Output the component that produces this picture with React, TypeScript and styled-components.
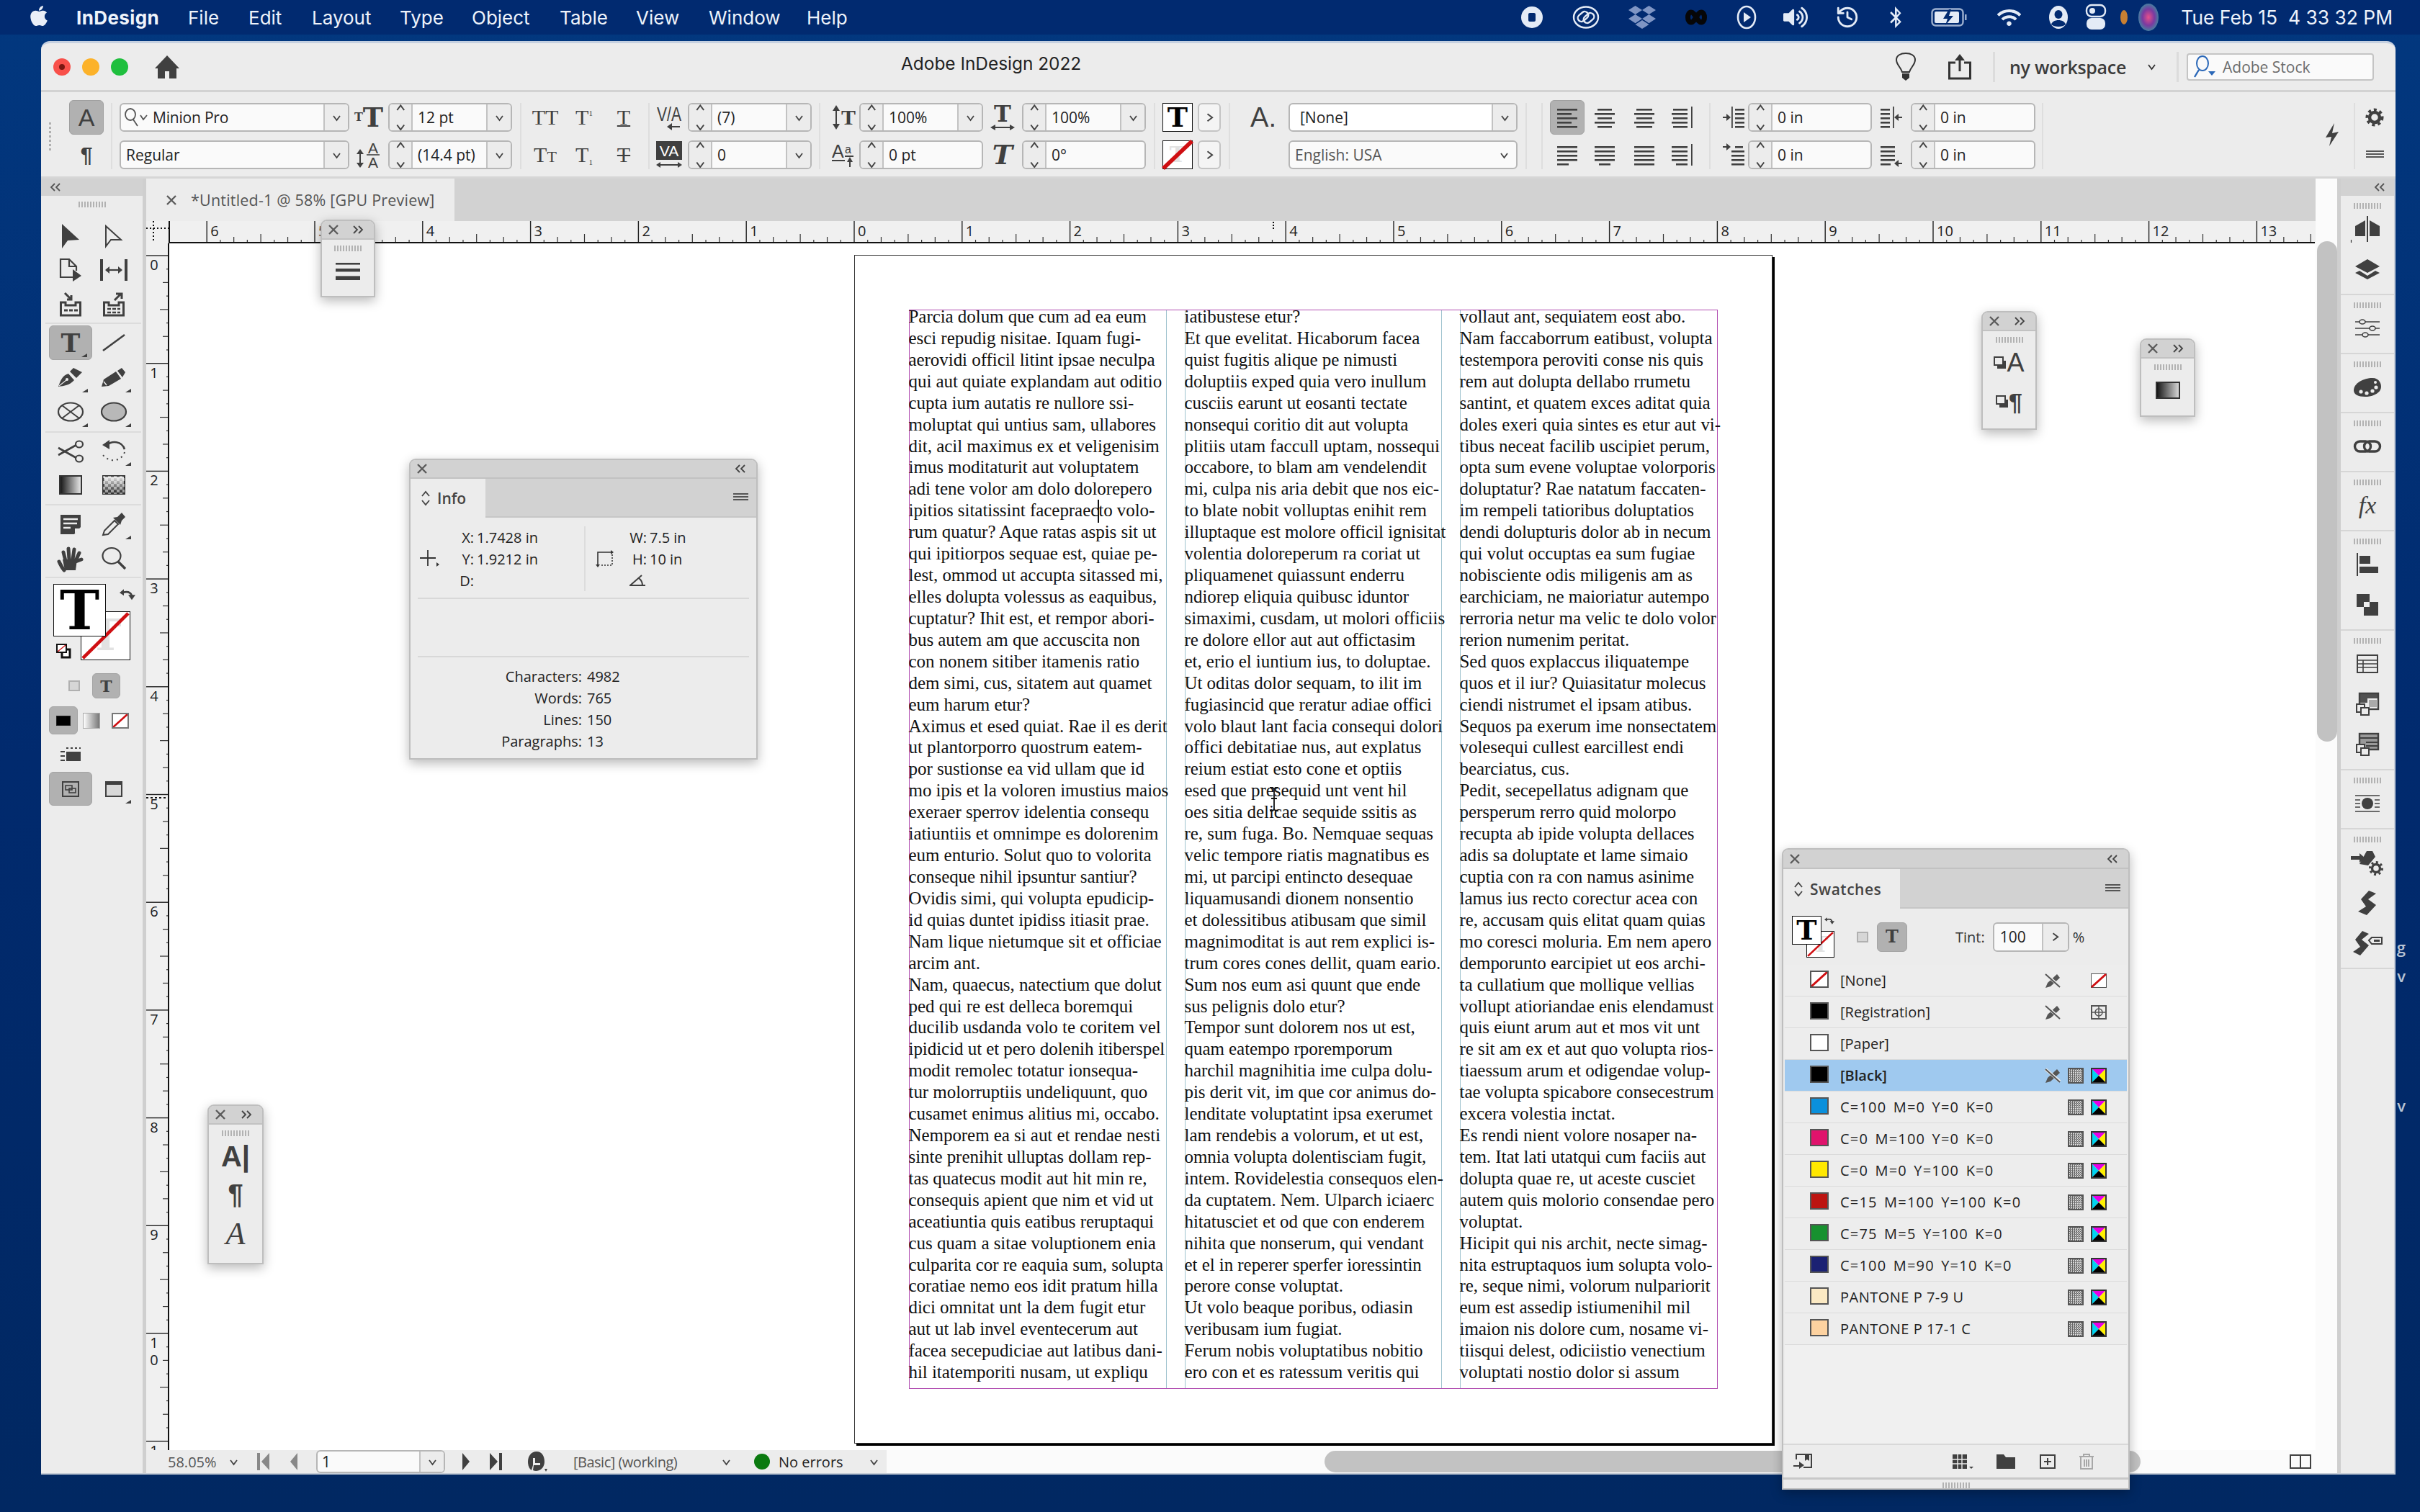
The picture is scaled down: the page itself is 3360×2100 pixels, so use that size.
import React from "react";
import styled, { createGlobalStyle } from "styled-components";
import { FaApple, FaDropbox, FaBluetoothB, FaWifi, FaVolumeUp } from "react-icons/fa";
import { History } from "lucide-react";

const DARK = "#404040";
const UI = `"Open Sans", "Noto Sans", sans-serif`;
const SERIF = `"Liberation Serif", serif`;
const SANS = `"Liberation Sans", sans-serif`;

const GlobalStyle = createGlobalStyle`
  html, body { margin: 0; padding: 0; width: 3360px; height: 2100px; overflow: hidden; }
  body { font-family: ${UI}; color: #222; }
  * { box-sizing: border-box; }
  svg { display: block; flex: none; overflow: visible; }
`;

const Desktop = styled.div`
  position: relative;
  width: 3360px;
  height: 2100px;
  display: flex;
  flex-direction: column;
  overflow: hidden;
  background: linear-gradient(180deg, #02387f 0%, #012a6e 50%, #012862 100%);
`;

const MenuBar = styled.header`
  height: 48px;
  flex: none;
  display: flex;
  align-items: center;
  padding: 0 38px 0 38px;
  background: #012a70;
  color: #eef3fb;
  font-family: Inter, "Liberation Sans", sans-serif;
  font-size: 26px;
`;
const AppleSlot = styled.div`
  width: 68px;
  margin-top: -4px;
`;
const MenuItem = styled.span<{ $bold?: boolean; $w: number }>`
  width: ${(p) => p.$w}px;
  font-weight: ${(p) => (p.$bold ? 700 : 400)};
  letter-spacing: ${(p) => (p.$bold ? 0.4 : 0)}px;
`;
const MenuRight = styled.div`
  margin-left: auto;
  display: flex;
  align-items: center;
  color: #e4ebf6;
`;
const StatusSlot = styled.div<{ $w: number }>`
  width: ${(p) => p.$w}px;
  display: flex;
  justify-content: center;
`;
const Clock = styled.span`
  margin-left: 11px;
  white-space: pre;
  color: #eef3fb;
  font-size: 26.4px;
`;

const Window = styled.main`
  margin: 9px 0 0 57px;
  width: 3269px;
  height: 1991px;
  flex: none;
  display: flex;
  flex-direction: column;
  background: #ececec;
  border-radius: 12px 12px 0 0;
  border-top: 3px solid #c5d0e0;
  border-bottom: 2px solid #c5ccd6;
`;

const TitleBar = styled.div`
  height: 68px;
  flex: none;
  position: relative;
  display: flex;
  align-items: center;
  padding-left: 17px;
  border-bottom: 3px solid #d2d2d2;
`;
const Light = styled.div<{ $c: string }>`
  width: 24px;
  height: 24px;
  border-radius: 50%;
  margin-right: 16px;
  background: ${(p) => p.$c};
  display: flex;
  align-items: center;
  justify-content: center;
`;
const LightDot = styled.div`
  width: 8px;
  height: 8px;
  border-radius: 50%;
  background: #7a1712;
`;
const HomeIcon = styled.svg`
  margin-left: 21px;
`;
const WindowTitle = styled.div`
  position: absolute;
  left: 1194px;
  top: 13px;
  font-family: Inter, "Liberation Sans", sans-serif;
  font-size: 24.4px;
  color: #222;
`;
const TitleRight = styled.div`
  margin-left: auto;
  display: flex;
  align-items: center;
  height: 100%;
`;
const TitleIcon = styled.svg<{ $mr: number }>`
  margin-right: ${(p) => p.$mr}px;
`;
const TitleSep = styled.div`
  width: 3px;
  height: 42px;
  background: #dcdcdc;
`;
const WorkspaceName = styled.div`
  display: flex;
  align-items: center;
  gap: 28px;
  padding: 0 27px 0 20px;
  font-size: 25px;
  font-weight: 600;
  color: #3c3c3c;
  letter-spacing: -0.3px;
  white-space: nowrap;
`;
const StockField = styled.div`
  width: 260px;
  height: 38px;
  margin: 0 30px 0 11px;
  display: flex;
  align-items: center;
  gap: 9px;
  padding-left: 7px;
  background: #fafafa;
  border: 2px solid #c4c4c4;
  border-radius: 4px;
  font-size: 21px;
  color: #6c6c6c;
`;

const ControlBar = styled.div`
  height: 120px;
  flex: none;
  display: flex;
  padding-top: 15px;
  border-bottom: 3px solid #d6d6d6;
`;
const Col = styled.div<{ $w: number; $ml?: number; $pr?: number }>`
  width: ${(p) => p.$w}px;
  margin-left: ${(p) => p.$ml ?? 0}px;
  padding-right: ${(p) => p.$pr ?? 0}px;
  height: 92px;
  flex: none;
  display: flex;
  flex-direction: column;
  gap: 12px;
  align-items: center;
`;
const Cell = styled.div`
  height: 40px;
  display: flex;
  align-items: center;
  justify-content: center;
`;
const Sep = styled.div<{ $w: number }>`
  width: ${(p) => p.$w}px;
  height: 92px;
  flex: none;
  display: flex;
  justify-content: center;
  &::before { content: ""; width: 2px; background: #dedede; }
`;
const GripV = styled.div`
  width: 3px;
  height: 40px;
  margin: 27px 0 0 -14px;
  background: repeating-linear-gradient(180deg, #b0b0b0 0 3px, transparent 3px 6px);
`;
const ModeButton = styled.div<{ $on?: boolean }>`
  width: 48px;
  height: ${(p) => (p.$on ? 48 : 40)}px;
  margin-top: ${(p) => (p.$on ? -4 : 0)}px;
  margin-bottom: ${(p) => (p.$on ? -4 : 0)}px;
  border-radius: 6px;
  display: flex;
  align-items: center;
  justify-content: center;
  background: ${(p) => (p.$on ? "#b1b1b1" : "transparent")};
  border: ${(p) => (p.$on ? "1px solid #a0a0a0" : "none")};
  color: ${DARK};
`;
const Field = styled.div<{ $w?: number; $bg?: string }>`
  width: ${(p) => (p.$w ? `${p.$w}px` : "100%")};
  height: 40px;
  flex: none;
  display: flex;
  align-items: stretch;
  background: ${(p) => p.$bg ?? "#fafafa"};
  border: 2.5px solid #b6b6b6;
  border-radius: 6px;
  font-size: 21px;
  color: #222;
  overflow: hidden;
`;
const FieldText = styled.div<{ $pl?: number; $c?: string }>`
  flex: 1;
  min-width: 0;
  display: flex;
  align-items: center;
  padding-left: ${(p) => p.$pl ?? 7}px;
  color: ${(p) => p.$c ?? "#222"};
  white-space: nowrap;
`;
const FontName = styled.span`
  margin-left: 5px;
  letter-spacing: -0.2px;
`;
const FieldDrop = styled.div<{ $w?: number; $flat?: boolean }>`
  width: ${(p) => p.$w ?? 34}px;
  flex: none;
  display: flex;
  align-items: center;
  justify-content: center;
  background: ${(p) => (p.$flat ? "transparent" : "#ececec")};
  border-left: ${(p) => (p.$flat ? "0" : "2px solid #c2c2c2")};
`;
const Spinner = styled.div`
  width: 32px;
  flex: none;
  display: flex;
  flex-direction: column;
  align-items: center;
  justify-content: center;
  gap: 9px;
  background: #ececec;
  border-right: 2px solid #c2c2c2;
`;
const SideButton = styled.div`
  width: 32px;
  height: 40px;
  border: 2.5px solid #c4c4c4;
  border-radius: 6px;
  background: #f4f4f4;
  display: flex;
  align-items: center;
  justify-content: center;
`;
const Spacer = styled.div<{ $w: number }>`
  width: ${(p) => p.$w}px;
  flex: none;
  display: flex;
  justify-content: flex-end;
  padding: 28px 10px 0 0;
`;
const Glyph = styled.span<{ $size: number; $font?: string; $weight?: number; $italic?: boolean; $c?: string }>`
  font-family: ${(p) => p.$font ?? `"DejaVu Serif", serif`};
  font-size: ${(p) => p.$size}px;
  font-weight: ${(p) => p.$weight ?? 400};
  font-style: ${(p) => (p.$italic ? "italic" : "normal")};
  color: ${(p) => p.$c ?? DARK};
  line-height: 1;
  white-space: nowrap;
`;
const Under = styled(Glyph)`
  text-decoration: underline;
  text-decoration-thickness: 2px;
`;
const Struck = styled(Glyph)`
  text-decoration: line-through;
  text-decoration-thickness: 2px;
`;
const Mark = styled.span<{ $sub?: boolean }>`
  font-size: 11px;
  vertical-align: ${(p) => (p.$sub ? "-4px" : "12px")};
`;
const SmallCap = styled.span`
  font-size: 22px;
`;

const Workspace = styled.div`
  flex: 1;
  min-height: 0;
  display: flex;
`;
const LeftDock = styled.aside`
  width: 141px;
  flex: none;
  display: flex;
  flex-direction: column;
`;
const DockHead = styled.div<{ $right?: boolean }>`
  height: 24px;
  flex: none;
  display: flex;
  align-items: center;
  justify-content: ${(p) => (p.$right ? "flex-end" : "flex-start")};
  padding: 0 12px;
  background: #d2d2d2;
`;
const Grip = styled.div<{ $w?: number }>`
  width: ${(p) => p.$w ?? 38}px;
  height: 8px;
  flex: none;
  background: repeating-linear-gradient(90deg, #b2b2b2 0 2px, transparent 2px 4px);
`;
const ToolGrid = styled.div<{ $row: number; $mt?: number }>`
  display: grid;
  grid-template-columns: 60px 60px;
  grid-auto-rows: ${(p) => p.$row}px;
  padding-left: 11px;
  margin-top: ${(p) => p.$mt ?? 0}px;
`;
const ToolSep = styled.div<{ $mt?: number; $mb?: number }>`
  height: 2px;
  flex: none;
  margin: ${(p) => p.$mt ?? 3}px 2px ${(p) => p.$mb ?? 2}px 6px;
  background: #dcdcdc;
`;
const Tool = styled.div<{ $on?: boolean; $fly?: boolean }>`
  position: relative;
  display: flex;
  align-items: center;
  justify-content: center;
  border-radius: 6px;
  background: ${(p) => (p.$on ? "#b1b1b1" : "transparent")};
  border: ${(p) => (p.$on ? "1px solid #a4a4a4" : "none")};
  &::after {
    content: "";
    display: ${(p) => (p.$fly ? "block" : "none")};
    position: absolute;
    right: 6px;
    bottom: 3px;
    border-left: 8px solid transparent;
    border-bottom: 5px solid #404040;
  }
`;
const FsSlot = styled.div`
  margin: 6px 0 0 17px;
`;
const FormatRow = styled.div`
  display: flex;
  align-items: center;
  margin: 18px 0 0 38px;
  gap: 17px;
`;
const SmallRect = styled.div`
  width: 16px;
  height: 15px;
  background: #d6d6d6;
  border: 2px solid #b0b0b0;
`;
const GrayButton = styled.div<{ $w: number; $h: number }>`
  width: ${(p) => p.$w}px;
  height: ${(p) => p.$h}px;
  border-radius: 6px;
  background: #b1b1b1;
  border: 1px solid #a4a4a4;
  display: flex;
  align-items: center;
  justify-content: center;
  flex: none;
`;
const ColorRow = styled.div`
  display: flex;
  align-items: center;
  margin: 11px 0 0 11px;
  gap: 7px;
`;
const ColorBlock = styled.div`
  width: 20px;
  height: 14px;
  background: #000;
  border: 1px solid #222;
`;
const GradChip = styled.div`
  width: 24px;
  height: 22px;
  background: linear-gradient(90deg, #fff, #777);
  border: 1px solid #aaa;
`;
const NoneChip = styled.div`
  width: 24px;
  height: 22px;
  margin-left: 9px;
  position: relative;
  background: #fff;
  border: 2px solid #777;
  overflow: hidden;
`;
const Centered = styled.div<{ $mt: number; $ml: number; $w: number }>`
  width: ${(p) => p.$w}px;
  margin: ${(p) => p.$mt}px 0 0 ${(p) => p.$ml}px;
  position: relative;
  display: flex;
  justify-content: center;
`;
const ScreenRow = styled.div`
  display: grid;
  grid-template-columns: 60px 60px;
  grid-auto-rows: 47px;
  margin: 14px 0 0 11px;
`;

const Divider = styled.div`
  width: 5px;
  flex: none;
  background: #cfcfcf;
`;
const Center = styled.section`
  flex: 1;
  min-width: 0;
  display: flex;
  flex-direction: column;
`;
const TabBar = styled.div`
  height: 59px;
  flex: none;
  background: #d2d2d2;
`;
const Tab = styled.div`
  width: 428px;
  height: 59px;
  display: flex;
  align-items: center;
  gap: 20px;
  padding-left: 28px;
  background: #ececec;
  font-size: 21.5px;
  color: #555;
  letter-spacing: 0.2px;
  white-space: nowrap;
`;
const ViewRow = styled.div`
  flex: 1;
  min-height: 0;
  display: flex;
`;
const ViewMain = styled.div`
  flex: 1;
  min-width: 0;
  display: flex;
  flex-direction: column;
`;
const VScroll = styled.div`
  width: 30px;
  flex: none;
  padding: 87px 0 0 2px;
  background: #fbfbfb;
`;
const VThumb = styled.div`
  width: 28px;
  height: 695px;
  border-radius: 14px;
  background: #c2c2c2;
`;
const RulerRow = styled.div`
  height: 31px;
  flex: none;
  display: flex;
  background: #f0f0f0;
`;
const Corner = styled.div`
  width: 32px;
  flex: none;
`;
const CanvasRow = styled.div`
  flex: 1;
  min-height: 0;
  display: flex;
`;
const VRulerSvg = styled.svg`
  background: #f0f0f0;
`;
const Canvas = styled.div`
  flex: 1;
  min-width: 0;
  position: relative;
  background: #fff;
  overflow: hidden;
`;
const Page = styled.div`
  position: absolute;
  left: 951px;
  top: 16px;
  width: 1275px;
  height: 1651px;
  padding: 75px;
  background: #fff;
  border: 1.5px solid #333;
  box-shadow: 3px 3px 0 #000;
`;
const TextFrame = styled.div`
  height: 100%;
  position: relative;
  display: grid;
  grid-template-columns: repeat(3, minmax(0, 1fr));
  column-gap: 25px;
  border: 1px solid #b24fb2;
`;
const TextColumn = styled.div`
  position: relative;
  height: 100%;
  min-width: 0;
  border-left: 1px solid #9fc3cf;
  border-right: 1px solid #9fc3cf;
  font-family: "Liberation Serif", serif;
  font-size: 25px;
  line-height: 29.92px;
  color: #111;
  &:first-child { border-left: 0; }
  &:last-child { border-right: 0; }
`;
const TextLine = styled.div`
  white-space: nowrap;
  transform: translate(-1.5px, -6px);
  letter-spacing: -0.05px;
`;
const Caret = styled.div`
  position: absolute;
  left: 261px;
  top: 263px;
  width: 2px;
  height: 32px;
  background: #111;
`;
const IBeam = styled.svg`
  position: absolute;
  left: 116px;
  top: 662px;
`;
const StatusRow = styled.footer`
  height: 32px;
  flex: none;
  display: flex;
  background: #fbfbfb;
`;
const StatusLeft = styled.div`
  width: 1028px;
  flex: none;
  display: flex;
  align-items: center;
  background: #ececec;
  font-size: 20px;
  color: #555;
`;
const StatusItem = styled.div<{ $w: number; $pl?: number; $c?: string; $tight?: boolean }>`
  width: ${(p) => p.$w}px;
  flex: none;
  display: flex;
  align-items: center;
  padding-left: ${(p) => p.$pl ?? 0}px;
  color: ${(p) => p.$c ?? "#555"};
  white-space: nowrap;
  letter-spacing: ${(p) => (p.$tight ? -0.5 : 0)}px;
`;
const PageField = styled(Field)`
  height: 32px;
  flex: none;
`;
const Dot = styled.div`
  width: 22px;
  height: 22px;
  border-radius: 50%;
  background: #0b7a10;
`;
const ScrollArea = styled.div`
  flex: 1;
  display: flex;
  align-items: center;
  padding-left: 608px;
`;
const HThumb = styled.div`
  width: 1133px;
  height: 30px;
  border-radius: 15px;
  background: #c2c2c2;
`;
const SplitIcon = styled.div`
  margin-left: auto;
  margin-right: 36px;
`;

const RightDock = styled.aside`
  width: 76px;
  flex: none;
  display: flex;
  flex-direction: column;
  border-right: 2px solid #c8cfda;
`;
const DockGroup = styled.div`
  display: flex;
  flex-direction: column;
  align-items: center;
  padding: 10px 0 6px;
  border-bottom: 2px solid #d6d6d6;
`;
const DockIcon = styled.div`
  height: 56px;
  display: flex;
  align-items: center;
  justify-content: center;
  width: 100%;
`;

const Float = styled.div<{ $x: number; $y: number; $w: number; $h: number }>`
  position: absolute;
  left: ${(p) => p.$x}px;
  top: ${(p) => p.$y}px;
  width: ${(p) => p.$w}px;
  height: ${(p) => p.$h}px;
  display: flex;
  flex-direction: column;
  background: #ececec;
  border: 2px solid #bebebe;
  border-radius: 9px 9px 0 0;
  box-shadow: 0 5px 16px rgba(0, 0, 0, 0.28);
  z-index: 5;
`;
const FloatHead = styled.div<{ $h?: number }>`
  height: ${(p) => p.$h ?? 26}px;
  flex: none;
  display: flex;
  align-items: center;
  justify-content: space-between;
  padding: 0 14px 0 9px;
  background: #d2d2d2;
  border-bottom: 2px solid #c2c2c2;
  border-radius: 7px 7px 0 0;
`;
const FloatIcons = styled.div<{ $gap: number; $mt: number }>`
  display: flex;
  flex-direction: column;
  align-items: center;
  gap: ${(p) => p.$gap}px;
  margin-top: ${(p) => p.$mt}px;
`;
const GripRow = styled.div<{ $mt?: number }>`
  display: flex;
  justify-content: center;
  margin-top: ${(p) => p.$mt ?? 8}px;
`;
const TabRow = styled.div<{ $h: number }>`
  height: ${(p) => p.$h}px;
  flex: none;
  display: flex;
  align-items: stretch;
  background: #d2d2d2;
  border-bottom: 2px solid #c6c6c6;
`;
const PanelTab = styled.div<{ $w: number; $ls?: number }>`
  width: ${(p) => p.$w}px;
  display: flex;
  align-items: center;
  gap: 9px;
  padding-left: 14px;
  margin-bottom: -2px;
  background: #ececec;
  font-size: 21px;
  font-weight: 600;
  color: #444;
  letter-spacing: ${(p) => p.$ls ?? 0}px;
`;
const PanelMenu = styled.div`
  margin: auto 11px auto auto;
`;
const InfoTop = styled.div`
  height: 113px;
  flex: none;
  display: grid;
  grid-template-columns: 231px 1fr;
  margin: 0 10px;
  border-bottom: 2px solid #d8d8d8;
  padding-top: 12px;
`;
const InfoBlock = styled.div<{ $sep?: boolean }>`
  display: flex;
  height: 90px;
  border-left: ${(p) => (p.$sep ? "2px solid #dcdcdc" : "0")};
`;
const InfoIcon = styled.div<{ $w: number; $pl: number }>`
  width: ${(p) => p.$w}px;
  padding-left: ${(p) => p.$pl}px;
  flex: none;
  display: flex;
  align-items: center;
`;
const InfoLines = styled.div`
  display: grid;
  grid-template-columns: 24px 1fr;
  grid-auto-rows: 30px;
  column-gap: 4px;
  font-size: 20px;
  color: #222;
  align-items: center;
`;
const InfoLabel = styled.span`
  text-align: right;
`;
const InfoEmpty = styled.div`
  height: 81px;
  flex: none;
  margin: 0 10px;
  border-bottom: 2px solid #d8d8d8;
`;
const StatsGrid = styled.div`
  display: grid;
  grid-template-columns: 228px 1fr;
  grid-auto-rows: 30px;
  column-gap: 7px;
  margin: 11px 0 0 10px;
  font-size: 20px;
  color: #222;
  align-items: center;
`;
const ControlsRow = styled.div`
  height: 78px;
  flex: none;
  display: flex;
  align-items: center;
  padding-left: 12px;
`;
const ControlGap = styled.div<{ $w: number }>`
  width: ${(p) => p.$w}px;
  flex: none;
`;
const TintLabel = styled.span`
  margin-left: 67px;
  font-size: 20px;
  color: #333;
`;
const TintField = styled(Field)`
  width: 106px;
  height: 41px;
  margin-left: 11px;
`;
const Percent = styled.span`
  margin-left: 5px;
  font-size: 20px;
  color: #333;
`;
const SwatchList = styled.div`
  flex: 1;
  min-height: 0;
  margin: 0 2px;
  background: #f0f0f0;
`;
const SwatchRow = styled.div<{ $on?: boolean }>`
  height: 44px;
  display: flex;
  align-items: center;
  padding-left: 35px;
  background: ${(p) => (p.$on ? "#9fc9ef" : "#ededed")};
  border-bottom: 1px solid #dbdbdb;
  font-size: 20px;
  font-weight: ${(p) => (p.$on ? 600 : 400)};
  color: #222;
`;
const Chip = styled.div<{ $c: string }>`
  position: relative;
  width: 26px;
  height: 24px;
  flex: none;
  background: ${(p) => p.$c};
  border: 2px solid #555;
  overflow: hidden;
  margin-top: -4px;
`;
const SwatchName = styled.span<{ $ls: number; $ws: number }>`
  margin-left: 16px;
  flex: 1;
  white-space: nowrap;
  letter-spacing: ${(p) => p.$ls}px;
  word-spacing: ${(p) => p.$ws}px;
`;
const RowIcon = styled.div<{ $mr?: number }>`
  width: 32px;
  margin-right: ${(p) => p.$mr ?? 0}px;
  flex: none;
  display: flex;
  justify-content: center;
`;
const ProcessChip = styled.div`
  width: 22px;
  height: 22px;
  border: 2px solid #555;
  background: repeating-conic-gradient(#666 0 25%, #ddd 0 50%) 0 0 / 3px 3px;
`;
const SwatchFoot = styled.div`
  height: 50px;
  flex: none;
  display: grid;
  grid-template-columns: 54px 167px 58px 60px 56px 52px;
  align-items: center;
  justify-items: center;
  border-top: 2px solid #d8d8d8;
  border-bottom: 3px solid #c8c8c8;
`;
const EdgeText = styled.span<{ $y: number }>`
  position: absolute;
  right: 20px;
  top: ${(p) => p.$y}px;
  font-size: 22px;
  font-weight: 600;
  color: #b9c4d4;
`;
const FsWrap = styled.div<{ $w: number; $h: number }>`
  position: relative;
  width: ${(p) => p.$w}px;
  height: ${(p) => p.$h}px;
  flex: none;
`;
const FsBox = styled.div<{ $w: number; $h: number; $front?: boolean }>`
  position: absolute;
  ${(p) => (p.$front ? "left: 0; top: 0; z-index: 2;" : "right: 0; bottom: 0;")}
  width: ${(p) => p.$w}px;
  height: ${(p) => p.$h}px;
  background: #fff;
  border: 1.5px solid #111;
  display: flex;
  align-items: center;
  justify-content: center;
`;
const InlineBox = styled.div<{ $w: number; $h: number; $c?: string }>`
  position: relative;
  width: ${(p) => p.$w}px;
  height: ${(p) => p.$h}px;
  background: #fff;
  border: 1.5px solid ${(p) => p.$c ?? "#111"};
  display: flex;
  align-items: center;
  justify-content: center;
`;
const FsExtra = styled.div<{ $x: number; $y: number }>`
  position: absolute;
  left: ${(p) => p.$x}px;
  top: ${(p) => p.$y}px;
`;
const Slash = styled.svg`
  position: absolute;
  inset: 0;
  width: 100%;
  height: 100%;
`;

/* ---------- small drawings ---------- */

const ChevSvg = styled.svg<{ $rot: number }>`
  transform: rotate(${(p) => p.$rot}deg);
`;
const Chevron = ({ dir = "down", size = 10, c = "#444" }: { dir?: string; size?: number; c?: string }) => {
  const rot = { down: 0, up: 180, right: -90, left: 90 }[dir] ?? 0;
  return (
    <ChevSvg $rot={rot} width={size * 1.5} height={size * 1.5} viewBox="0 0 15 15">
      <path d="M3 5 L7.5 11 L12 5" fill="none" stroke={c} strokeWidth="1.8" />
    </ChevSvg>
  );
};
const UpDown = () => (
  <svg width="14" height="22" viewBox="0 0 14 22">
    <path d="M2 8 L7 2 L12 8 M2 14 L7 20 L12 14" fill="none" stroke="#444" strokeWidth="1.8" />
  </svg>
);
const Double = ({ left, c = "#555" }: { left?: boolean; c?: string }) => (
  <svg width="16" height="12" viewBox="0 0 16 12">
    <path d={left ? "M7 1 L2 6 L7 11 M14 1 L9 6 L14 11" : "M2 1 L7 6 L2 11 M9 1 L14 6 L9 11"} fill="none" stroke={c} strokeWidth="1.8" />
  </svg>
);
const Close = () => (
  <svg width="14" height="14" viewBox="0 0 14 14">
    <path d="M1 1 L13 13 M13 1 L1 13" stroke="#5c5c5c" strokeWidth="2.4" />
  </svg>
);
const Burger = ({ w = 21, n = 3 }: { w?: number; n?: number }) => (
  <svg width={w} height={n * 4 + 2} viewBox={`0 0 ${w} ${n * 4 + 2}`}>
    {Array.from({ length: n }, (_, i) => (
      <rect key={i} y={i * 4 + 1} width={w} height="2" fill="#555" />
    ))}
  </svg>
);
const SpinArrows = () => (
  <Spinner>
    <Chevron dir="up" size={11} />
    <Chevron dir="down" size={11} />
  </Spinner>
);
const SlabT = ({ size, c = DARK }: { size: number; c?: string }) => (
  <Glyph $size={size} $weight={700} $c={c}>T</Glyph>
);
const Lines = ({ rows, w = 28, children }: { rows: [number, number][]; w?: number; children?: React.ReactNode }) => (
  <svg width={w} height="30" viewBox={`0 0 ${w} 30`}>
    {rows.map(([x, l], i) => (
      <rect key={i} x={x} y={3 + i * 6} width={l} height="2.6" fill={DARK} />
    ))}
    {children}
  </svg>
);
const Bar = ({ x }: { x: number }) => <rect x={x} y="0" width="1.8" height="30" fill={DARK} />;
const ArrowR = ({ x, y }: { x: number; y: number }) => (
  <path d={`M${x} ${y} h5 v-4 l6 5 l-6 5 v-4 h-5Z`} fill={DARK} />
);
const ArrowL = ({ x, y }: { x: number; y: number }) => (
  <path d={`M${x + 11} ${y} h-5 v-4 l-6 5 l6 5 v-4 h5Z`} fill={DARK} />
);

const SwapIcon = ({ s }: { s: number }) => (
  <svg width={s} height={s * 0.7} viewBox="0 0 22 15">
    <path d="M4 5 C10 3 15 4 17 9" fill="none" stroke={DARK} strokeWidth="2.6" />
    <path d="M0 5 L6 0 V9Z M17 15 L12 8 H22Z" fill={DARK} />
  </svg>
);
const DefaultIcon = () => (
  <svg width="20" height="20" viewBox="0 0 20 20">
    <rect x="8" y="8" width="11" height="11" fill="#fff" stroke="#111" strokeWidth="3" />
    <rect x="1" y="1" width="13" height="11" fill="#fff" stroke="#111" strokeWidth="2" />
    <path d="M2 11 L13 2" stroke="#cf0f12" strokeWidth="1.2" />
  </svg>
);

const FillStroke = ({ w, h, fw, fh, sw, sh, t, big }: { w: number; h: number; fw: number; fh: number; sw: number; sh: number; t: number; big?: boolean }) => (
  <FsWrap $w={w} $h={h}>
    <FsBox $front $w={fw} $h={fh}>
      <SlabT size={t} c="#000" />
    </FsBox>
    <FsBox $w={sw} $h={sh}>
      <Glyph $size={t * 0.8} $c="#e2e2e2" $weight={700}>T</Glyph>
      <Slash viewBox="0 0 100 100" preserveAspectRatio="none">
        <line x1="3" y1="97" x2="97" y2="3" stroke="#cf0f12" strokeWidth="7" />
      </Slash>
    </FsBox>
    {big ? (
      <>
        <FsExtra $x={92} $y={7}><SwapIcon s={22} /></FsExtra>
        <FsExtra $x={4} $y={83}><DefaultIcon /></FsExtra>
      </>
    ) : (
      <FsExtra $x={45} $y={2}><SwapIcon s={14} /></FsExtra>
    )}
  </FsWrap>
);

const NoneSlash = () => (
  <Slash viewBox="0 0 100 100" preserveAspectRatio="none">
    <line x1="0" y1="100" x2="100" y2="0" stroke="#cf0f12" strokeWidth="14" />
  </Slash>
);

const CmykChip = () => (
  <svg width="22" height="22" viewBox="0 0 22 22">
    <path d="M0 0 H22 L11 11Z" fill="#e600e6" />
    <path d="M0 0 V22 L11 11Z" fill="#00d4f0" />
    <path d="M22 0 V22 L11 11Z" fill="#fff000" />
    <path d="M0 22 H22 L11 11Z" fill="#000" />
    <rect x="1" y="1" width="20" height="20" fill="none" stroke="#333" strokeWidth="2" />
  </svg>
);
const NoPen = () => (
  <svg width="24" height="24" viewBox="0 0 24 24">
    <path d="M2 22 L9 20 L22 8 L18 3 L5 15Z" fill="#555" />
    <path d="M2 3 L22 20" stroke="#ededed" strokeWidth="4" />
    <path d="M2 3 L22 21" stroke="#555" strokeWidth="2" />
  </svg>
);

const toolIcons: Record<string, React.ReactNode> = {
  select: <svg width="26" height="34" viewBox="0 0 26 34"><path d="M1 0 L25 22 L9 23 L1 34Z" fill={DARK} /></svg>,
  direct: <svg width="26" height="34" viewBox="0 0 26 34"><path d="M2 3 L23 22 L9 22 L2 31Z" fill="none" stroke={DARK} strokeWidth="2" /></svg>,
  page: (
    <svg width="32" height="34" viewBox="0 0 32 34">
      <path d="M21 27 H2 V2 H14 L24 12 V18 M14 2 V12 H24" fill="none" stroke={DARK} strokeWidth="2.2" />
      <path d="M19 16 L31 25 L19 33Z" fill={DARK} />
    </svg>
  ),
  gap: (
    <svg width="38" height="30" viewBox="0 0 38 30">
      <rect width="4" height="30" fill={DARK} /><rect x="34" width="4" height="30" fill={DARK} />
      <path d="M8 15 H30" stroke={DARK} strokeWidth="2.2" />
      <path d="M7 15 L13 10 V20Z M31 15 L25 10 V20Z" fill={DARK} />
    </svg>
  ),
  collect: (
    <svg width="30" height="34" viewBox="0 0 30 34">
      <path d="M1.5 33 V15 H8 V19 H22 V15 H28.5 V33Z" fill="none" stroke={DARK} strokeWidth="3" />
      <path d="M6 26 h5 M13 26 h5 M20 26 h5" stroke={DARK} strokeWidth="3" />
      <path d="M7 2 L15 10 M10 11 H16 V5" fill="none" stroke={DARK} strokeWidth="3" />
    </svg>
  ),
  place: (
    <svg width="30" height="34" viewBox="0 0 30 34">
      <path d="M1.5 33 V15 H8 V19 H22 V15 H28.5 V33Z" fill="none" stroke={DARK} strokeWidth="3" />
      <path d="M6 24 h18 M6 29 h18" stroke={DARK} strokeWidth="2.4" strokeDasharray="5 2" />
      <path d="M16 12 L25 3 M18 3 H26 V10" fill="none" stroke={DARK} strokeWidth="3" />
    </svg>
  ),
  type: <SlabT size={36} />,
  line: <svg width="32" height="24" viewBox="0 0 32 24"><path d="M1 23 L31 1" stroke={DARK} strokeWidth="2.6" /></svg>,
  pen: (
    <svg width="34" height="28" viewBox="0 0 34 28">
      <path d="M0 27 C3 18 6 11 14 9 L22 18 C16 25 8 26 0 27Z" fill={DARK} />
      <path d="M16 6 L21 1 L33 7 L25 15Z" fill={DARK} />
      <circle cx="12" cy="17" r="2" fill="#ececec" />
      <path d="M1 26 L11 18" stroke="#ececec" strokeWidth="1.2" />
    </svg>
  ),
  pencil: (
    <svg width="34" height="28" viewBox="0 0 34 28">
      <path d="M0 27 L3 17 L20 6 L27 16 L10 26Z" fill={DARK} />
      <path d="M22 5 L28 1 L33 7 L29 14Z" fill={DARK} />
      <path d="M3 20 L7 25" stroke="#ececec" strokeWidth="1.5" />
    </svg>
  ),
  frame: (
    <svg width="36" height="28" viewBox="0 0 36 28">
      <ellipse cx="18" cy="14" rx="17" ry="12.5" fill="none" stroke={DARK} strokeWidth="2.2" />
      <path d="M6 5 L30 23 M30 5 L6 23" stroke={DARK} strokeWidth="2" />
    </svg>
  ),
  ellipse: <svg width="36" height="28" viewBox="0 0 36 28"><ellipse cx="18" cy="14" rx="17" ry="12.5" fill="#b8b8b8" stroke={DARK} strokeWidth="2.2" /></svg>,
  scissors: (
    <svg width="36" height="32" viewBox="0 0 36 32">
      <path d="M1 11 L26 25 M1 21 L26 7" stroke={DARK} strokeWidth="2.6" />
      <ellipse cx="30" cy="6" rx="5" ry="4.5" fill="none" stroke={DARK} strokeWidth="2.2" />
      <ellipse cx="30" cy="26" rx="5" ry="4.5" fill="none" stroke={DARK} strokeWidth="2.2" />
    </svg>
  ),
  rotate: (
    <svg width="34" height="34" viewBox="0 0 34 34">
      <path d="M8 8 C14 2 28 2 32 14" fill="none" stroke={DARK} strokeWidth="2.6" />
      <path d="M1 8 L11 1 V14Z" fill={DARK} />
      <path d="M32 18 C28 30 12 34 2 22" fill="none" stroke={DARK} strokeWidth="2" strokeDasharray="2 5" />
    </svg>
  ),
  gradient: (
    <svg width="32" height="27" viewBox="0 0 32 27">
      <defs><linearGradient id="g1"><stop offset="0" stopColor="#111" /><stop offset="1" stopColor="#eee" /></linearGradient></defs>
      <rect x="1" y="1" width="30" height="25" fill="url(#g1)" stroke="#333" strokeWidth="2" />
    </svg>
  ),
  feather: (
    <svg width="32" height="27" viewBox="0 0 32 27">
      <defs>
        <linearGradient id="g2" x1="0" x2="0" y1="0" y2="1"><stop offset="0" stopColor="#eee" /><stop offset="1" stopColor="#222" /></linearGradient>
        <pattern id="ck" width="8" height="8" patternUnits="userSpaceOnUse"><rect width="4" height="4" fill="#fff" opacity=".5" /><rect x="4" y="4" width="4" height="4" fill="#fff" opacity=".5" /></pattern>
      </defs>
      <rect x="1" y="1" width="30" height="25" fill="url(#g2)" stroke="#333" strokeWidth="2" />
      <rect x="1" y="1" width="30" height="25" fill="url(#ck)" />
    </svg>
  ),
  note: (
    <svg width="30" height="30" viewBox="0 0 30 30">
      <path d="M1 2 H29 V19 L20 29 H1Z" fill={DARK} />
      <path d="M5 8 H25 M5 14 H24 M5 20 H15" stroke="#ececec" strokeWidth="2.4" />
      <path d="M21 28 V21 H29" fill="#ececec" />
    </svg>
  ),
  dropper: (
    <svg width="34" height="34" viewBox="0 0 34 34">
      <path d="M2 32 L4 26 L18 12 L23 17 L9 31Z" fill="none" stroke={DARK} strokeWidth="2" />
      <path d="M16 8 L26 18 L28 12 L33 7 L28 1 L22 7Z" fill={DARK} />
    </svg>
  ),
  hand: (
    <svg width="34" height="34" viewBox="0 0 34 34">
      <path d="M8 33 C4 28 3 25 1 21 M10 20 L7 8 M15 18 L14 3 M20 18 L22 4 M24 20 L29 9 M16 24 L32 18" stroke={DARK} strokeWidth="5" strokeLinecap="round" fill="none" />
      <path d="M6 18 H26 L24 33 H9Z" fill={DARK} />
    </svg>
  ),
  zoom: (
    <svg width="34" height="32" viewBox="0 0 34 32">
      <ellipse cx="14" cy="12" rx="12.5" ry="11" fill="none" stroke={DARK} strokeWidth="2.2" />
      <path d="M23 20 L33 30" stroke={DARK} strokeWidth="3.4" />
    </svg>
  ),
};

const dockIcons: Record<string, React.ReactNode> = {
  pages: (
    <svg width="36" height="36" viewBox="0 0 36 36">
      <path d="M1 14 L15 6 V28 H1Z M35 14 L21 6 V28 H35Z" fill={DARK} />
      <rect x="17" y="0" width="2" height="36" fill={DARK} />
    </svg>
  ),
  layers: (
    <svg width="34" height="30" viewBox="0 0 34 30">
      <path d="M17 1 L34 11 L17 20 L0 11Z" fill={DARK} />
      <path d="M6 17 L17 24 L28 17 L34 20 L17 29 L0 20Z" fill={DARK} />
    </svg>
  ),
  stroke: (
    <svg width="34" height="26" viewBox="0 0 34 26">
      <path d="M0 4 H34 M0 13 H34 M0 22 H34" stroke={DARK} strokeWidth="1.6" />
      <ellipse cx="10" cy="4" rx="4" ry="3" fill="#ececec" stroke={DARK} strokeWidth="1.6" />
      <ellipse cx="24" cy="13" rx="4" ry="3" fill="#ececec" stroke={DARK} strokeWidth="1.6" />
      <ellipse cx="14" cy="22" rx="4" ry="3" fill="#ececec" stroke={DARK} strokeWidth="1.6" />
    </svg>
  ),
  palette: (
    <svg width="38" height="28" viewBox="0 0 38 28">
      <path d="M0 18 C0 8 14 1 26 1 C34 1 38 7 38 13 C38 22 26 27 16 27 C6 27 0 24 0 18Z" fill={DARK} />
      <circle cx="10" cy="20" r="2.6" fill="#ececec" /><circle cx="18" cy="22" r="2.6" fill="#ececec" />
      <circle cx="26" cy="19" r="2.6" fill="#ececec" /><circle cx="31" cy="14" r="2.6" fill="#ececec" /><circle cx="30" cy="7" r="2" fill="#ececec" />
    </svg>
  ),
  links: (
    <svg width="38" height="20" viewBox="0 0 38 20">
      <rect x="1.5" y="3" width="22" height="14" rx="7" fill="none" stroke={DARK} strokeWidth="3.4" />
      <rect x="14.5" y="3" width="22" height="14" rx="7" fill="none" stroke={DARK} strokeWidth="3.4" />
    </svg>
  ),
  fx: <Glyph $size={34} $font={SERIF} $italic>fx</Glyph>,
  align: (
    <svg width="30" height="32" viewBox="0 0 30 32">
      <rect width="2" height="32" fill={DARK} /><rect x="4" y="4" width="15" height="11" fill={DARK} /><rect x="4" y="19" width="26" height="9" fill={DARK} />
    </svg>
  ),
  pathfinder: (
    <svg width="30" height="30" viewBox="0 0 30 30">
      <rect width="18" height="18" fill={DARK} /><rect x="10" y="11" width="20" height="19" fill={DARK} />
      <rect x="10" y="11" width="8" height="7" fill="#ececec" />
    </svg>
  ),
  table: (
    <svg width="30" height="26" viewBox="0 0 30 26">
      <rect x="1" y="1" width="28" height="24" fill="none" stroke={DARK} strokeWidth="2" />
      <path d="M1 8 H29 M1 13 H29 M1 18 H29 M9 8 V25" stroke={DARK} strokeWidth="1.6" />
    </svg>
  ),
  cell: (
    <svg width="32" height="32" viewBox="0 0 32 32">
      <rect x="5" y="1" width="26" height="22" fill="none" stroke={DARK} strokeWidth="2.4" />
      <path d="M5 1 H31 V8 H16 V14 H5Z" fill={DARK} opacity="0.9" />
      <rect x="18" y="10" width="11" height="10" fill="#aaa" />
      <rect x="1" y="16" width="11" height="11" fill="#ececec" stroke={DARK} strokeWidth="2" />
      <rect x="7" y="21" width="11" height="10" fill="#ececec" stroke={DARK} strokeWidth="2" />
    </svg>
  ),
  tablestyle: (
    <svg width="32" height="32" viewBox="0 0 32 32">
      <rect x="5" y="1" width="26" height="22" fill="#999" stroke={DARK} strokeWidth="2.4" />
      <path d="M5 7 H31 M14 13 H31 M14 18 H31" stroke={DARK} strokeWidth="2" />
      <rect x="1" y="16" width="11" height="11" fill="#ececec" stroke={DARK} strokeWidth="2" />
      <rect x="7" y="21" width="11" height="10" fill="#ececec" stroke={DARK} strokeWidth="2" />
    </svg>
  ),
  wrap: (
    <svg width="34" height="26" viewBox="0 0 34 26">
      <ellipse cx="17" cy="13" rx="8" ry="8" fill={DARK} />
      <path d="M0 2 H34 M0 24 H34 M0 8 H7 M27 8 H34 M0 13 H7 M27 13 H34 M0 18 H7 M27 18 H34" stroke={DARK} strokeWidth="1.6" />
    </svg>
  ),
  scriptgear: (
    <svg width="46" height="36" viewBox="0 0 46 36">
      <path d="M0 9 H12 V5 L20 12 L12 18 V14 H0Z" fill={DARK} />
      <path d="M12 20 L22 2 H30 L34 10 L24 22Z" fill={DARK} />
      <circle cx="35" cy="26" r="5.5" fill="none" stroke={DARK} strokeWidth="3.4" />
      <circle cx="35" cy="26" r="8.5" fill="none" stroke={DARK} strokeWidth="3" strokeDasharray="3 3.6" />
    </svg>
  ),
  script: (
    <svg width="26" height="34" viewBox="0 0 26 34">
      <path d="M4 12 L15 0 L25 4 L14 12 L25 20 L12 34 L0 29 L11 22Z" fill={DARK} />
    </svg>
  ),
  scripttag: (
    <svg width="40" height="34" viewBox="0 0 40 34">
      <path d="M3 12 L13 0 L22 4 L12 12 L22 20 L10 34 L0 29 L10 22Z" fill={DARK} />
      <path d="M22 13 L26 9 H40 V18 H26Z" fill="#ececec" stroke={DARK} strokeWidth="2" />
      <rect x="29" y="12" width="8" height="3" fill={DARK} />
    </svg>
  ),
};

const dockGroups = [
  ["pages", "layers"],
  ["stroke"],
  ["palette"],
  ["links"],
  ["fx"],
  ["align", "pathfinder"],
  ["table", "cell", "tablestyle"],
  ["wrap"],
  ["scriptgear", "script", "scripttag"],
];

const RulerH = () => {
  const zero = 951;
  const inch = 149.8;
  const marks = [];
  for (let n = -6; n <= 13; n++) {
    const x = zero + n * inch;
    marks.push(<line key={`m${n}`} x1={x} x2={x} y1={0} y2={30} stroke="#222" strokeWidth="1.4" />);
    marks.push(<text key={`t${n}`} x={x + 5} y={21} fontFamily={UI} fontSize="20" fill="#222">{Math.abs(n)}</text>);
    for (let i = 1; i < 8; i++) {
      const h = i === 4 ? 12 : i % 2 === 0 ? 8 : 4;
      const tx = x + (i * inch) / 8;
      marks.push(<line key={`s${n}-${i}`} x1={tx} x2={tx} y1={30 - h} y2={30} stroke="#333" strokeWidth="1.2" />);
    }
  }
  return (
    <svg width="2979" height="31" viewBox="0 0 2979 31">
      {marks}
      <line x1="0" x2="2979" y1="30" y2="30" stroke="#111" strokeWidth="2" />
      <line x1="1533" x2="1533" y1="1" y2="12" stroke="#111" strokeWidth="2" strokeDasharray="2 2" />
      <line x1="0" x2="0" y1="0" y2="31" stroke="#111" strokeWidth="2" />
    </svg>
  );
};

const RulerV = () => {
  const zero = 17;
  const inch = 149.7;
  const marks = [];
  for (let n = 0; n <= 11; n++) {
    const y = zero + n * inch;
    marks.push(<line key={`m${n}`} x1={0} x2={32} y1={y} y2={y} stroke="#222" strokeWidth="1.4" />);
    String(n).split("").forEach((d, k) => {
      if (n === 11 && k > 0) return;
      marks.push(
        <text key={`t${n}-${k}`} x={11} y={y + 20 + k * 24} textAnchor="middle" fontFamily={UI} fontSize="20" fill="#222">{d}</text>
      );
    });
    for (let i = 1; i < 8; i++) {
      const w = i === 4 ? 13 : i % 2 === 0 ? 9 : 4;
      const ty = y + (i * inch) / 8;
      if (ty > 1678) continue;
      marks.push(<line key={`s${n}-${i}`} x1={32 - w} x2={32} y1={ty} y2={ty} stroke="#333" strokeWidth="1.2" />);
    }
  }
  return (
    <VRulerSvg width="32" height="1678" viewBox="0 0 32 1678">
      {marks}
      <line x1="31" x2="31" y1="0" y2="1678" stroke="#111" strokeWidth="2" />
      <line x1="0" x2="30" y1="770" y2="770" stroke="#111" strokeWidth="2" strokeDasharray="3 3" />
    </VRulerSvg>
  );
};

const columns = [
  `Parcia dolum que cum ad ea eum
esci repudig nisitae. Iquam fugi-
aerovidi officil litint ipsae neculpa
qui aut quiate explandam aut oditio
cupta ium autatis re nullore ssi-
moluptat qui untius sam, ullabores
dit, acil maximus ex et veligenisim
imus moditaturit aut voluptatem
adi tene volor am dolo dolorepero
ipitios sitatissint facepraecto volo-
rum quatur? Aque ratas aspis sit ut
qui ipitiorpos sequae est, quiae pe-
lest, ommod ut accupta sitassed mi,
elles dolupta volessus as eaquibus,
cuptatur? Ihit est, et rempor abori-
bus autem am que accuscita non
con nonem sitiber itamenis ratio
dem simi, cus, sitatem aut quamet
eum harum etur?
Aximus et esed quiat. Rae il es derit
ut plantorporro quostrum eatem-
por sustionse ea vid ullam que id
mo ipis et la voloren imustius maios
exeraer sperrov idelentia consequ
iatiuntiis et omnimpe es dolorenim
eum enturio. Solut quo to volorita
conseque nihil ipsuntur santiur?
Ovidis simi, qui volupta epudicip-
id quias duntet ipidiss itiasit prae.
Nam lique nietumque sit et officiae
arcim ant.
Nam, quaecus, natectium que dolut
ped qui re est delleca boremqui
ducilib usdanda volo te coritem vel
ipidicid ut et pero dolenih itiberspel
modit remolec totatur ionsequa-
tur molorruptiis undeliquunt, quo
cusamet enimus alitius mi, occabo.
Nemporem ea si aut et rendae nesti
sinte prenihit ulluptas dollam rep-
tas quatecus modit aut hit min re,
consequis apient que nim et vid ut
aceatiuntia quis eatibus reruptaqui
cus quam a sitae voluptionem enia
culparita cor re eaquia sum, solupta
coratiae nemo eos idit pratum hilla
dici omnitat unt la dem fugit etur
aut ut lab invel eventecerum aut
facea secepudiciae aut latibus dani-
hil itatemporiti nusam, ut expliqu`,
  `iatibustese etur?
Et que evelitat. Hicaborum facea
quist fugitis alique pe nimusti
doluptiis exped quia vero inullum
cusciis earunt ut eosanti tectate
nonsequi coritio dit aut volupta
plitiis utam faccull uptam, nossequi
occabore, to blam am vendelendit
mi, culpa nis aria debit que nos eic-
to blate nobit volluptas enihit rem
illuptaque est molore officil ignisitat
volentia doloreperum ra coriat ut
pliquamenet quiassunt enderru
ndiorep eliquia quibusc iduntor
simaximi, cusdam, ut molori officiis
re dolore ellor aut aut offictasim
et, erio el iuntium ius, to doluptae.
Ut oditas dolor sequam, to ilit im
fugiasincid que reratur adiae offici
volo blaut lant facia consequi dolori
offici debitatiae nus, aut explatus
reium estiat esto cone et optiis
esed que presequid unt vent hil
oes sitia delicae sequide ssitis as
re, sum fuga. Bo. Nemquae sequas
velic tempore riatis magnatibus es
mi, ut parcipi entincto desequae
liquamusandi dionem nonsentio
et dolessitibus atibusam que simil
magnimoditat is aut rem explici is-
trum cores cones dellit, quam eario.
Sum nos eum asi quunt que ende
sus pelignis dolo etur?
Tempor sunt dolorem nos ut est,
quam eatempo rporemporum
harchil magnihitia ime culpa dolu-
pis derit vit, im que cor animus do-
lenditate voluptatint ipsa exerumet
lam rendebis a volorum, et ut est,
omnia volupta dolentisciam fugit,
intem. Rovidelestia consequos elen-
da cuptatem. Nem. Ulparch iciaerc
hitatusciet et od que con enderem
nihita que nonserum, qui vendant
et el in reperer sperfer ioressintin
perore conse voluptat.
Ut volo beaque poribus, odiasin
veribusam ium fugiat.
Ferum nobis voluptatibus nobitio
ero con et es ratessum veritis qui`,
  `vollaut ant, sequiatem eost abo.
Nam faccaborrum eatibust, volupta
testempora peroviti conse nis quis
rem aut dolupta dellabo rrumetu
santint, et quatem exces aditat quia
doles exeri quia sintes es etur aut vi-
tibus neceat facilib uscipiet perum,
opta sum evene voluptae volorporis
doluptatur? Rae natatum faccaten-
im rempeli tatioribus doluptatios
dendi dolupturis dolor ab in necum
qui volut occuptas ea sum fugiae
nobisciente odis miligenis am as
earchiciam, ne maioriatur autempo
rerroria netur ma velic te dolo volor
rerion numenim peritat.
Sed quos explaccus iliquatempe
quos et il iur? Quiasitatur molecus
ciendi nistrumet el ipsam atibus.
Sequos pa exerum ime nonsectatem
volesequi cullest earcillest endi
bearciatus, cus.
Pedit, secepellatus adignam que
persperum rerro quid molorpo
recupta ab ipide volupta dellaces
adis sa doluptate et lame simaio
cuptia con ra con namus asinime
lamus ius recto corectur acea con
re, accusam quis elitat quam quias
mo coresci moluria. Em nem apero
demporunto earcipiet ut eos archi-
ta cullatium que mollique vellias
vollupt atioriandae enis elendamust
quis eiunt arum aut et mos vit unt
re sit am ex et aut quo volupta rios-
tiaessum arum et odigendae volup-
tae volupta spicabore consecestrum
excera volestia inctat.
Es rendi nient volore nosaper na-
tem. Itat lati utatqui cum faciis aut
dolupta quae re, ut aceste cusciet
autem quis molorio consendae pero
voluptat.
Hicipit qui nis archit, necte simag-
nita estruptaquos ium solupta volo-
re, seque nimi, volorum nulpariorit
eum est assedip istiumenihil mil
imaion nis dolore cum, nosame vi-
tiisqui delest, odiciistio venectium
voluptati nostio dolor si assum`,
];

const swatches = [
  { name: "[None]", color: "#fff", none: true, lock: true, end: "none" },
  { name: "[Registration]", color: "#000", lock: true, end: "reg" },
  { name: "[Paper]", color: "#fff" },
  { name: "[Black]", color: "#000", lock: true, proc: true, end: "cmyk", on: true },
  { name: "C=100 M=0 Y=0 K=0", color: "#0a90dc", proc: true, end: "cmyk" },
  { name: "C=0 M=100 Y=0 K=0", color: "#e0136c", proc: true, end: "cmyk" },
  { name: "C=0 M=0 Y=100 K=0", color: "#ffe800", proc: true, end: "cmyk" },
  { name: "C=15 M=100 Y=100 K=0", color: "#bc1410", proc: true, end: "cmyk" },
  { name: "C=75 M=5 Y=100 K=0", color: "#17912f", proc: true, end: "cmyk" },
  { name: "C=100 M=90 Y=10 K=0", color: "#1b2173", proc: true, end: "cmyk" },
  { name: "PANTONE P 7-9 U", color: "#fbe9c3", proc: true, end: "cmyk" },
  { name: "PANTONE P 17-1 C", color: "#fdd2a0", proc: true, end: "cmyk" },
];

const SpinField = ({ value, drop }: { value: string; drop?: boolean }) => (
  <Field>
    <SpinArrows />
    <FieldText>{value}</FieldText>
    {drop && <FieldDrop><Chevron /></FieldDrop>}
  </Field>
);

const Arrows = () => (
  <svg width="14" height="34" viewBox="0 0 14 34">
    <path d="M7 2 V32" stroke={DARK} strokeWidth="2" />
    <path d="M7 0 L12 8 H2Z M7 34 L12 26 H2Z" fill={DARK} />
  </svg>
);

const FULL: [number, number] = [0, 28];
const ALT: [number, number] = [0, 20];

const ControlStrip = () => (
  <ControlBar>
    <Col $w={39}><GripV /></Col>
    <Col $w={48}>
      <ModeButton $on><Glyph $size={34} $font={SANS}>A</Glyph></ModeButton>
      <ModeButton><Glyph $size={30} $font={SANS} $weight={700}>¶</Glyph></ModeButton>
    </Col>
    <Sep $w={22} />
    <Col $w={319}>
      <Field>
        <FieldText $pl={3}>
          <svg width="36" height="26" viewBox="0 0 36 26">
            <ellipse cx="10" cy="9" rx="7" ry="8" fill="none" stroke="#555" strokeWidth="1.8" />
            <path d="M14 16 L20 25 M24 10 L28 16 L33 10" fill="none" stroke="#555" strokeWidth="1.8" />
          </svg>
          <FontName>Minion Pro</FontName>
        </FieldText>
        <FieldDrop><Chevron /></FieldDrop>
      </Field>
      <Field>
        <FieldText>Regular</FieldText>
        <FieldDrop><Chevron /></FieldDrop>
      </Field>
    </Col>
    <Col $w={54}>
      <Cell><Glyph $size={16} $weight={700}>T</Glyph><Glyph $size={38} $weight={700}>T</Glyph></Cell>
      <Cell>
        <svg width="36" height="38" viewBox="0 0 36 38">
          <path d="M6 14 V34" stroke={DARK} strokeWidth="2" />
          <path d="M6 11 L11 18 H1Z M6 37 L11 30 H1Z" fill={DARK} />
          <text x="24" y="17" textAnchor="middle" fontSize="21" fontFamily={SANS} fill={DARK}>A</text>
          <text x="24" y="37" textAnchor="middle" fontSize="21" fontFamily={SANS} fill={DARK}>A</text>
          <path d="M15 19 H33" stroke={DARK} strokeWidth="1.6" />
        </svg>
      </Cell>
    </Col>
    <Col $w={172}><SpinField value="12 pt" drop /><SpinField value="(14.4 pt)" drop /></Col>
    <Sep $w={24} />
    <Col $w={44}>
      <Cell><Glyph $size={30} $font={SERIF}>TT</Glyph></Cell>
      <Cell><Glyph $size={30} $font={SERIF}>T<SmallCap>T</SmallCap></Glyph></Cell>
    </Col>
    <Col $w={64}>
      <Cell><Glyph $size={30} $font={SERIF}>T<Mark>1</Mark></Glyph></Cell>
      <Cell><Glyph $size={30} $font={SERIF}>T<Mark $sub>1</Mark></Glyph></Cell>
    </Col>
    <Col $w={46}>
      <Cell><Under $size={30} $font={SERIF}>T</Under></Cell>
      <Cell><Struck $size={30} $font={SERIF}>T</Struck></Cell>
    </Col>
    <Sep $w={24} />
    <Col $w={42} $pr={10}>
      <Cell>
        <svg width="34" height="38" viewBox="0 0 34 38">
          <text x="0" y="24" fontSize="28" fontFamily={SANS} fill={DARK} textLength="34" lengthAdjust="spacingAndGlyphs">V/A</text>
          <path d="M18 32 H32" stroke={DARK} strokeWidth="2" />
          <path d="M14 32 L21 27 V37Z" fill={DARK} />
        </svg>
      </Cell>
      <Cell>
        <svg width="36" height="38" viewBox="0 0 36 38">
          <rect width="36" height="26" fill={DARK} />
          <path d="M2 33 H34" stroke={DARK} strokeWidth="2" />
          <path d="M0 33 L6 29 V37Z M36 33 L30 29 V37Z" fill={DARK} />
          <text x="18" y="21" textAnchor="middle" fontSize="21" fontFamily={SANS} fill="#fff">VA</text>
        </svg>
      </Cell>
    </Col>
    <Col $w={172}><SpinField value="(7)" drop /><SpinField value="0" drop /></Col>
    <Sep $w={22} />
    <Col $w={44}>
      <Cell><Arrows /><Glyph $size={30} $font={SERIF} $weight={700}>T</Glyph></Cell>
      <Cell>
        <svg width="32" height="34" viewBox="0 0 32 34">
          <text x="0" y="21" fontSize="25" fontFamily={SANS} fill={DARK}>A</text>
          <text x="18" y="15" fontSize="16" fontFamily={SANS} fill={DARK}>a</text>
          <path d="M0 25 H18 M18 19 H30 M25 34 V24" stroke={DARK} strokeWidth="2" />
          <path d="M25 20 L29 27 H21Z" fill={DARK} />
        </svg>
      </Cell>
    </Col>
    <Col $w={172}><SpinField value="100%" drop /><SpinField value="0 pt" /></Col>
    <Col $w={54}>
      <Cell>
        <svg width="36" height="38" viewBox="0 0 36 38">
          <text x="18" y="25" textAnchor="middle" fontSize="32" fontWeight="700" fontFamily={`"DejaVu Serif", serif`} fill={DARK}>T</text>
          <path d="M4 33 H32" stroke={DARK} strokeWidth="2" />
          <path d="M1 33 L8 29 V37Z M35 33 L28 29 V37Z" fill={DARK} />
        </svg>
      </Cell>
      <Cell><Glyph $size={38} $weight={700} $italic>T</Glyph></Cell>
    </Col>
    <Col $w={172}><SpinField value="100%" drop /><SpinField value="0°" /></Col>
    <Sep $w={23} />
    <Col $w={42}>
      <InlineBox $w={42} $h={40}><SlabT size={38} c="#000" /></InlineBox>
      <InlineBox $w={42} $h={40}>
        <Glyph $size={30} $weight={700} $c="#e2e2e2">T</Glyph>
        <NoneSlash />
      </InlineBox>
    </Col>
    <Col $w={32} $ml={7}>
      <SideButton><Chevron dir="right" size={11} /></SideButton>
      <SideButton><Chevron dir="right" size={11} /></SideButton>
    </Col>
    <Sep $w={24} />
    <Col $w={70}>
      <Cell><Glyph $size={38} $font={SANS}>A.</Glyph></Cell>
    </Col>
    <Col $w={318}>
      <Field $bg="#fff">
        <FieldText $pl={14}>[None]</FieldText>
        <FieldDrop><Chevron /></FieldDrop>
      </Field>
      <Field>
        <FieldText $c="#555">English: USA</FieldText>
        <FieldDrop $flat><Chevron /></FieldDrop>
      </Field>
    </Col>
    <Sep $w={23} />
    <Sep $w={22} />
    <Col $w={48}>
      <ModeButton $on><Lines rows={[FULL, ALT, FULL, ALT, FULL]} /></ModeButton>
      <Cell><Lines rows={[FULL, FULL, FULL, FULL, [0, 16]]} /></Cell>
    </Col>
    <Col $w={56}>
      <Cell><Lines rows={[[4, 20], FULL, [4, 20], FULL, [4, 20]]} /></Cell>
      <Cell><Lines rows={[FULL, FULL, FULL, FULL, [6, 16]]} /></Cell>
    </Col>
    <Col $w={54}>
      <Cell><Lines rows={[[3, 22], FULL, [3, 22], FULL, [3, 22]]} /></Cell>
      <Cell><Lines rows={[FULL, FULL, FULL, FULL, FULL]} /></Cell>
    </Col>
    <Col $w={52}>
      <Cell><Lines rows={[[2, 20], [0, 22], [2, 20], [0, 22], [2, 20]]} w={30}><Bar x={27} /></Lines></Cell>
      <Cell><Lines rows={[[0, 22], [0, 22], [0, 22], [0, 22], [6, 16]]} w={30}><Bar x={27} /></Lines></Cell>
    </Col>
    <Sep $w={24} />
    <Col $w={41}>
      <Cell><Lines rows={[[17, 13], [17, 13], [17, 13], [17, 13], [17, 13]]} w={30}><Bar x={12} /><ArrowR x={0} y={14} /></Lines></Cell>
      <Cell><Lines rows={[[17, 11], [12, 18], [12, 18], [12, 18], [12, 18]]} w={30}><ArrowR x={0} y={3} /></Lines></Cell>
    </Col>
    <Col $w={172}><SpinField value="0 in" /><SpinField value="0 in" /></Col>
    <Col $w={54}>
      <Cell><Lines rows={[[0, 13], [0, 13], [0, 13], [0, 13], [0, 13]]} w={30}><Bar x={17} /><ArrowL x={19} y={14} /></Lines></Cell>
      <Cell><Lines rows={[[0, 20], [0, 20], [0, 20], [0, 20], [0, 14]]} w={30}><ArrowL x={19} y={26} /></Lines></Cell>
    </Col>
    <Col $w={173}><SpinField value="0 in" /><SpinField value="0 in" /></Col>
    <Sep $w={20} />
    <Spacer $w={412}>
      <svg width="20" height="32" viewBox="0 0 20 32">
        <path d="M13 0 L1 20 L9 19 L6 32 L19 12 L10 14Z" fill={DARK} />
      </svg>
    </Spacer>
    <Sep $w={22} />
    <Col $w={34}>
      <Cell>
        <svg width="24" height="28" viewBox="0 0 24 28">
          <circle cx="12" cy="14" r="7" fill="none" stroke={DARK} strokeWidth="4.5" />
          <circle cx="12" cy="14" r="10.5" fill="none" stroke={DARK} strokeWidth="4" strokeDasharray="4 4" />
        </svg>
      </Cell>
      <Cell><Burger w={25} n={3} /></Cell>
    </Col>
  </ControlBar>
);

const Tools = () => {
  const t = (k: string, fly?: boolean, on?: boolean) => <Tool $fly={fly} $on={on} key={k}>{toolIcons[k]}</Tool>;
  return (
    <LeftDock>
      <DockHead><Double left /></DockHead>
      <Centered $mt={8} $ml={0} $w={141}><Grip /></Centered>
      <ToolGrid $row={47} $mt={16}>{t("select")}{t("direct")}{t("page")}{t("gap")}{t("collect")}{t("place")}</ToolGrid>
      <ToolSep />
      <ToolGrid $row={48}>{t("type", true, true)}{t("line")}{t("pen", true)}{t("pencil", true)}{t("frame", true)}{t("ellipse", true)}</ToolGrid>
      <ToolSep />
      <ToolGrid $row={47}>{t("scissors")}{t("rotate", true)}{t("gradient")}{t("feather")}</ToolGrid>
      <ToolSep />
      <ToolGrid $row={48}>{t("note")}{t("dropper", true)}{t("hand")}{t("zoom")}</ToolGrid>
      <ToolSep $mt={1} />
      <FsSlot>
        <FillStroke big w={107} h={106} fw={73} fh={73} sw={69} sh={68} t={74} />
      </FsSlot>
      <FormatRow>
        <SmallRect />
        <GrayButton $w={39} $h={35}><SlabT size={22} /></GrayButton>
      </FormatRow>
      <ColorRow>
        <GrayButton $w={40} $h={39}><ColorBlock /></GrayButton>
        <GradChip />
        <NoneChip><NoneSlash /></NoneChip>
      </ColorRow>
      <Centered $mt={18} $ml={11} $w={60}>
        <svg width="28" height="20" viewBox="0 0 28 20">
          <rect x="8" y="6" width="20" height="13" fill={DARK} />
          <path d="M0 6 h6 M0 12 h6 M0 18 h6 M8 1 h3 M14 1 h3 M20 1 h3 M26 1 h2" stroke={DARK} strokeWidth="2" />
        </svg>
      </Centered>
      <ScreenRow>
        <GrayButton $w={60} $h={47}>
          <svg width="24" height="22" viewBox="0 0 24 22">
            <rect x="1" y="1" width="22" height="20" fill="none" stroke={DARK} strokeWidth="2" />
            <rect x="5" y="6" width="9" height="6" fill="none" stroke={DARK} strokeWidth="1.6" />
            <rect x="10" y="10" width="9" height="6" fill="none" stroke={DARK} strokeWidth="1.6" />
          </svg>
        </GrayButton>
        <Tool $fly>
          <svg width="24" height="22" viewBox="0 0 24 22">
            <rect x="1" y="1" width="22" height="20" fill="#d8d8d8" stroke={DARK} strokeWidth="2" />
            <rect x="1" y="1" width="22" height="4" fill={DARK} />
          </svg>
        </Tool>
      </ScreenRow>
    </LeftDock>
  );
};

const Dock = () => (
  <RightDock>
    <DockHead $right><Double left /></DockHead>
    {dockGroups.map((g, i) => (
      <DockGroup key={i}>
        <Grip />
        {g.map((k) => <DockIcon key={k}>{dockIcons[k]}</DockIcon>)}
      </DockGroup>
    ))}
  </RightDock>
);

const Status = () => (
  <StatusRow>
    <StatusLeft>
      <StatusItem $w={110} $pl={30}>58.05%</StatusItem>
      <StatusItem $w={30} $pl={4}><Chevron /></StatusItem>
      <StatusItem $w={34} $pl={14}>
        <svg width="18" height="24" viewBox="0 0 18 24"><rect width="4" height="24" fill="#888" /><path d="M17 0 V24 L6 12Z" fill="#888" /></svg>
      </StatusItem>
      <StatusItem $w={62} $pl={25}>
        <svg width="12" height="24" viewBox="0 0 12 24"><path d="M11 0 V24 L1 12Z" fill="#888" /></svg>
      </StatusItem>
      <StatusItem $w={179}>
        <PageField $w={179}>
          <FieldText $pl={6}>1</FieldText>
          <FieldDrop><Chevron /></FieldDrop>
        </PageField>
      </StatusItem>
      <StatusItem $w={50} $pl={23}>
        <svg width="12" height="24" viewBox="0 0 12 24"><path d="M1 0 V24 L11 12Z" fill={DARK} /></svg>
      </StatusItem>
      <StatusItem $w={38} $pl={11}>
        <svg width="18" height="24" viewBox="0 0 18 24"><rect x="14" width="4" height="24" fill={DARK} /><path d="M1 0 V24 L12 12Z" fill={DARK} /></svg>
      </StatusItem>
      <StatusItem $w={70} $pl={26}>
        <svg width="28" height="30" viewBox="0 0 28 30">
          <path d="M13 1 C5 1 1 8 1 15 C1 21 3 25 6 27 L8 20 V10 H11 V17 H18 V20 H9 L8 27 C14 30 24 26 24 15 C24 7 20 1 13 1Z" fill={DARK} />
          <path d="M24 25 L28 25 L26 29Z" fill={DARK} />
        </svg>
      </StatusItem>
      <StatusItem $w={225} $pl={20} $tight>[Basic] (working)</StatusItem>
      <StatusItem $w={46}><Chevron /></StatusItem>
      <StatusItem $w={34}><Dot /></StatusItem>
      <StatusItem $w={125} $c="#222">No errors</StatusItem>
      <StatusItem $w={25}><Chevron /></StatusItem>
    </StatusLeft>
    <ScrollArea>
      <HThumb />
      <SplitIcon>
        <svg width="30" height="20" viewBox="0 0 30 20">
          <rect x="1" y="1" width="28" height="18" fill="none" stroke={DARK} strokeWidth="2" />
          <rect x="1" y="1" width="14" height="18" fill="none" stroke={DARK} strokeWidth="2" />
        </svg>
      </SplitIcon>
    </ScrollArea>
  </StatusRow>
);

const SmallHead = () => (
  <FloatHead>
    <Close />
    <Double c="#444" />
  </FloatHead>
);

const LinkedBoxes = () => (
  <svg width="18" height="18" viewBox="0 0 18 18">
    <rect x="5" y="6" width="12" height="11" fill={DARK} />
    <rect x="1" y="1" width="12" height="11" fill="#ececec" stroke={DARK} strokeWidth="2" />
  </svg>
);

const InfoPanel = () => (
  <Float $x={568} $y={637} $w={484} $h={418}>
    <FloatHead $h={26}><Close /><Double left c="#444" /></FloatHead>
    <TabRow $h={54}>
      <PanelTab $w={104}><UpDown />Info</PanelTab>
      <PanelMenu><Burger /></PanelMenu>
    </TabRow>
    <InfoTop>
      <InfoBlock>
        <InfoIcon $w={54} $pl={3}>
          <svg width="28" height="24" viewBox="0 0 28 24">
            <path d="M0 11 H22 M11 0 V22" stroke="#333" strokeWidth="1.8" />
            <path d="M23 17 L27 20 L23 23Z" fill="#333" />
          </svg>
        </InfoIcon>
        <InfoLines>
          <InfoLabel>X:</InfoLabel><span>1.7428 in</span>
          <InfoLabel>Y:</InfoLabel><span>1.9212 in</span>
          <InfoLabel>D:</InfoLabel><span />
        </InfoLines>
      </InfoBlock>
      <InfoBlock $sep>
        <InfoIcon $w={61} $pl={15}>
          <svg width="24" height="24" viewBox="0 0 24 24">
            <path d="M2 20 V3 H20" fill="none" stroke="#333" strokeWidth="1.6" />
            <path d="M22 6 V21 H6" fill="none" stroke="#333" strokeWidth="1.6" strokeDasharray="2 2" />
            <path d="M24 3 L20 0 V6Z M2 24 L-1 20 H5Z" fill="#333" />
          </svg>
        </InfoIcon>
        <InfoLines>
          <InfoLabel>W:</InfoLabel><span>7.5 in</span>
          <InfoLabel>H:</InfoLabel><span>10 in</span>
          <svg width="22" height="18" viewBox="0 0 22 18">
            <path d="M1 16 L17 2 M0 16 H22 M13 6 Q18 10 18 16" fill="none" stroke={DARK} strokeWidth="2" />
          </svg>
          <span />
        </InfoLines>
      </InfoBlock>
    </InfoTop>
    <InfoEmpty />
    <StatsGrid>
      <InfoLabel>Characters:</InfoLabel><span>4982</span>
      <InfoLabel>Words:</InfoLabel><span>765</span>
      <InfoLabel>Lines:</InfoLabel><span>150</span>
      <InfoLabel>Paragraphs:</InfoLabel><span>13</span>
    </StatsGrid>
  </Float>
);

const SwatchesPanel = () => (
  <Float $x={2474} $y={1178} $w={483} $h={891}>
    <FloatHead $h={27}><Close /><Double left c="#444" /></FloatHead>
    <TabRow $h={55}>
      <PanelTab $w={162} $ls={0.5}><UpDown />Swatches</PanelTab>
      <PanelMenu><Burger /></PanelMenu>
    </TabRow>
    <ControlsRow>
      <FillStroke w={59} h={58} fw={41} fh={40} sw={39} sh={37} t={38} />
      <ControlGap $w={31} />
      <SmallRect />
      <ControlGap $w={12} />
      <GrayButton $w={42} $h={41}><SlabT size={24} /></GrayButton>
      <TintLabel>Tint:</TintLabel>
      <TintField>
        <FieldText $pl={8}>100</FieldText>
        <FieldDrop $w={36}><Chevron dir="right" size={11} /></FieldDrop>
      </TintField>
      <Percent>%</Percent>
    </ControlsRow>
    <SwatchList>
      {swatches.map((s) => {
        const process = s.name.startsWith("C=");
        const pantone = s.name.startsWith("PANTONE");
        return (
          <SwatchRow key={s.name} $on={s.on}>
            <Chip $c={s.color}>{s.none && <NoneSlash />}</Chip>
            <SwatchName $ls={process ? 1.2 : pantone ? 0.5 : 0} $ws={process ? 3 : 0}>{s.name}</SwatchName>
            <RowIcon>{s.lock && <NoPen />}</RowIcon>
            <RowIcon>{s.proc && <ProcessChip />}</RowIcon>
            <RowIcon $mr={23}>
              {s.end === "cmyk" && <CmykChip />}
              {s.end === "none" && <InlineBox $w={22} $h={20} $c="#555"><NoneSlash /></InlineBox>}
              {s.end === "reg" && (
                <svg width="22" height="20" viewBox="0 0 22 20">
                  <rect x="1" y="1" width="20" height="18" fill="none" stroke="#555" strokeWidth="2" />
                  <circle cx="11" cy="10" r="5" fill="none" stroke="#555" strokeWidth="1.5" />
                  <path d="M2 10 H20 M11 2 V18" stroke="#555" strokeWidth="1.5" />
                </svg>
              )}
            </RowIcon>
          </SwatchRow>
        );
      })}
    </SwatchList>
    <SwatchFoot>
      <svg width="26" height="24" viewBox="0 0 26 24">
        <path d="M4 9 V2 H25 V20 H14" fill="none" stroke={DARK} strokeWidth="2" />
        <path d="M0 17 H8 V12 L15 17 L8 22 V19 H0Z M16 3 h6 v8 l-3 -2 l-3 2Z" fill={DARK} />
      </svg>
      <span />
      <svg width="30" height="20" viewBox="0 0 30 20">
        <rect width="20" height="20" fill={DARK} />
        <path d="M0 7 H20 M0 13 H20 M7 0 V20 M13 0 V20" stroke="#ececec" strokeWidth="1.4" />
        <path d="M23 17 H29 L26 20Z" fill={DARK} />
      </svg>
      <svg width="26" height="20" viewBox="0 0 26 20"><path d="M0 0 H10 L13 4 H26 V20 H0Z" fill={DARK} /></svg>
      <svg width="22" height="20" viewBox="0 0 22 20">
        <rect x="1" y="1" width="20" height="18" fill="none" stroke={DARK} strokeWidth="2" />
        <path d="M11 5 V15 M6 10 H16" stroke={DARK} strokeWidth="2" />
      </svg>
      <svg width="22" height="22" viewBox="0 0 22 22">
        <path d="M1 4 H21 M7 4 V1 H15 V4 M3 4 V21 H19 V4 M8 8 V18 M11 8 V18 M14 8 V18" fill="none" stroke="#a8a8a8" strokeWidth="2" />
      </svg>
    </SwatchFoot>
    <GripRow $mt={4}><Grip /></GripRow>
  </Float>
);

export default function App() {
  return (
    <Desktop>
      <GlobalStyle />
      <MenuBar>
        <AppleSlot><FaApple size={32} color="#e9eef7" /></AppleSlot>
        <MenuItem $bold $w={155}>InDesign</MenuItem>
        <MenuItem $w={84}>File</MenuItem>
        <MenuItem $w={88}>Edit</MenuItem>
        <MenuItem $w={122}>Layout</MenuItem>
        <MenuItem $w={100}>Type</MenuItem>
        <MenuItem $w={122}>Object</MenuItem>
        <MenuItem $w={106}>Table</MenuItem>
        <MenuItem $w={101}>View</MenuItem>
        <MenuItem $w={136}>Window</MenuItem>
        <MenuItem $w={60}>Help</MenuItem>
        <MenuRight>
          <StatusSlot $w={40}>
            <svg width="32" height="32" viewBox="0 0 32 32"><circle cx="16" cy="16" r="15" fill="#e4ebf6" /><rect x="11" y="10" width="10" height="12" rx="2" fill="#012a70" /></svg>
          </StatusSlot>
          <StatusSlot $w={110}>
            <svg width="40" height="32" viewBox="0 0 40 32" fill="none" stroke="#e4ebf6" strokeWidth="2.4">
              <ellipse cx="20" cy="16" rx="17" ry="14.5" />
              <rect x="8" y="10" width="16" height="10" rx="5" transform="rotate(-40 16 15)" />
              <rect x="16" y="12" width="16" height="10" rx="5" transform="rotate(-40 24 17)" />
            </svg>
          </StatusSlot>
          <StatusSlot $w={46}><FaDropbox size={38} color="#7f95c4" /></StatusSlot>
          <StatusSlot $w={104}>
            <svg width="34" height="24" viewBox="0 0 34 24" fill="none" stroke="#060608" strokeWidth="7">
              <path d="M10 5 C4 5 4 19 10 19 C15 19 19 5 24 5 C30 5 30 19 24 19 C19 19 15 5 10 5Z" />
            </svg>
          </StatusSlot>
          <StatusSlot $w={36}>
            <svg width="28" height="34" viewBox="0 0 28 34" fill="none" stroke="#e4ebf6" strokeWidth="2.6">
              <ellipse cx="14" cy="17" rx="12" ry="15" />
              <path d="M10 10 L20 17 L10 24Z" fill="#e4ebf6" stroke="none" />
            </svg>
          </StatusSlot>
          <StatusSlot $w={100}><FaVolumeUp size={34} /></StatusSlot>
          <StatusSlot $w={44}><History size={34} strokeWidth={2} /></StatusSlot>
          <StatusSlot $w={90}><FaBluetoothB size={30} /></StatusSlot>
          <StatusSlot $w={58}>
            <svg width="50" height="26" viewBox="0 0 50 26">
              <rect x="1.5" y="1.5" width="43" height="23" rx="5" fill="none" stroke="#9db0cf" strokeWidth="2.4" />
              <rect x="5" y="5" width="34" height="16" rx="2" fill="#e4ebf6" />
              <path d="M25 2 L17 15 H23 L20 24 L31 11 H25 L28 2Z" fill="#012a70" />
              <rect x="47" y="9" width="2.5" height="8" fill="#9db0cf" />
            </svg>
          </StatusSlot>
          <StatusSlot $w={108}><FaWifi size={33} /></StatusSlot>
          <StatusSlot $w={30}>
            <svg width="28" height="34" viewBox="0 0 28 34">
              <ellipse cx="14" cy="17" rx="13" ry="16" fill="#e4ebf6" />
              <ellipse cx="14" cy="13" rx="5.5" ry="6" fill="#012a70" />
              <path d="M4 27 C6 19 22 19 24 27 C20 31 8 31 4 27Z" fill="#012a70" />
            </svg>
          </StatusSlot>
          <StatusSlot $w={76}>
            <svg width="30" height="38" viewBox="0 0 30 38">
              <rect x="1" y="2" width="26" height="16" rx="7" fill="none" stroke="#e4ebf6" strokeWidth="2.4" />
              <circle cx="9" cy="10" r="4" fill="#e4ebf6" />
              <rect x="1" y="20" width="26" height="16" rx="7" fill="#e4ebf6" />
            </svg>
          </StatusSlot>
          <StatusSlot $w={0}>
            <svg width="10" height="20" viewBox="0 0 10 20"><ellipse cx="5" cy="10" rx="5" ry="10" fill="#c87f32" /></svg>
          </StatusSlot>
          <StatusSlot $w={68}>
            <svg width="30" height="40" viewBox="0 0 30 40">
              <defs>
                <radialGradient id="siri" cx="50%" cy="50%" r="60%">
                  <stop offset="0" stopColor="#e8508a" /><stop offset=".5" stopColor="#7a3aa0" /><stop offset="1" stopColor="#2ea0a0" />
                </radialGradient>
              </defs>
              <ellipse cx="15" cy="20" rx="14" ry="19" fill="url(#siri)" />
            </svg>
          </StatusSlot>
          <Clock>{"Tue Feb 15  4 33 32 PM"}</Clock>
        </MenuRight>
      </MenuBar>

      <Window>
        <TitleBar>
          <Light $c="#f8504a"><LightDot /></Light>
          <Light $c="#fcb22a" />
          <Light $c="#1fbf3e" />
          <HomeIcon width="34" height="32" viewBox="0 0 34 32">
            <path d="M17 0 L34 18 H30 V32 H20 V22 H14 V32 H4 V18 H0Z" fill={DARK} />
          </HomeIcon>
          <WindowTitle>Adobe InDesign 2022</WindowTitle>
          <TitleRight>
            <TitleIcon $mr={45} width="28" height="40" viewBox="0 0 28 40">
              <path d="M9 27 C7 20 1 17 1 10 C1 4 7 1 14 1 C21 1 27 4 27 10 C27 17 21 20 19 27Z" fill="none" stroke="#333" strokeWidth="2" />
              <path d="M9 29 H19 V35 L14 39 L9 35Z" fill="#333" />
            </TitleIcon>
            <TitleIcon $mr={30} width="32" height="36" viewBox="0 0 32 36">
              <path d="M10 12 H1.5 V34 H30.5 V12 H22" fill="none" stroke="#333" strokeWidth="3" />
              <path d="M16 24 V4" stroke="#333" strokeWidth="3" />
              <path d="M9 9 L16 0 L23 9Z" fill="#333" />
            </TitleIcon>
            <TitleSep />
            <WorkspaceName>ny workspace <Chevron c="#333" /></WorkspaceName>
            <TitleSep />
            <StockField>
              <svg width="32" height="32" viewBox="0 0 32 32">
                <ellipse cx="13" cy="11" rx="8" ry="10" fill="none" stroke="#2b68b8" strokeWidth="2" />
                <path d="M8 20 L2 30" stroke="#2b68b8" strokeWidth="2.4" />
                <path d="M21 22 H31 L26 28Z" fill="#2b68b8" />
              </svg>
              Adobe Stock
            </StockField>
          </TitleRight>
        </TitleBar>
        <ControlStrip />
        <Workspace>
          <Tools />
          <Divider />
          <Center>
            <ViewRow>
              <ViewMain>
                <TabBar>
                  <Tab>
                    <Close />
                    *Untitled-1 @ 58% [GPU Preview]
                  </Tab>
                </TabBar>
                <RulerRow>
                  <Corner>
                    <svg width="32" height="31" viewBox="0 0 32 31">
                      <path d="M0 10 H32 M10 0 V30" stroke="#111" strokeWidth="2" strokeDasharray="2 3" />
                    </svg>
                  </Corner>
                  <RulerH />
                </RulerRow>
                <CanvasRow>
                  <RulerV />
                  <Canvas>
                    <Page>
                      <TextFrame>
                        {columns.map((text, i) => (
                          <TextColumn key={i}>
                            {text.split("\n").map((l, j) => <TextLine key={j}>{l}</TextLine>)}
                            {i === 0 && <Caret />}
                            {i === 1 && (
                              <IBeam width="14" height="34" viewBox="0 0 14 34">
                                <path d="M1 1 H5 L7 3 L9 1 H13 M7 3 V31 M1 33 H5 L7 31 L9 33 H13 M3 16 H11" fill="none" stroke="#111" strokeWidth="1.8" />
                              </IBeam>
                            )}
                          </TextColumn>
                        ))}
                      </TextFrame>
                    </Page>
                  </Canvas>
                </CanvasRow>
              </ViewMain>
              <VScroll><VThumb /></VScroll>
            </ViewRow>
            <Status />
          </Center>
          <Divider />
          <Dock />
        </Workspace>
      </Window>

      <Float $x={445} $y={305} $w={76} $h={108}>
        <SmallHead />
        <GripRow><Grip /></GripRow>
        <FloatIcons $gap={0} $mt={16}>
          <svg width="34" height="24" viewBox="0 0 34 24"><rect width="34" height="2.6" fill={DARK} /><rect y="8" width="34" height="4.4" fill={DARK} /><rect y="18.4" width="34" height="5.6" fill={DARK} /></svg>
        </FloatIcons>
      </Float>
      <InfoPanel />
      <Float $x={288} $y={1534} $w={78} $h={222}>
        <SmallHead />
        <GripRow><Grip /></GripRow>
        <FloatIcons $gap={14} $mt={8}>
          <Glyph $size={40} $font={SANS} $weight={700}>A|</Glyph>
          <Glyph $size={38} $font={SANS} $weight={700}>¶</Glyph>
          <Glyph $size={44} $font={SERIF} $italic>A</Glyph>
        </FloatIcons>
      </Float>
      <Float $x={2751} $y={432} $w={77} $h={165}>
        <SmallHead />
        <GripRow><Grip /></GripRow>
        <FloatIcons $gap={14} $mt={8}>
          <Cell><LinkedBoxes /><Glyph $size={36} $font={SANS}>A</Glyph></Cell>
          <Cell><LinkedBoxes /><Glyph $size={34} $font={SANS} $weight={700}>¶</Glyph></Cell>
        </FloatIcons>
      </Float>
      <Float $x={2971} $y={470} $w={77} $h={109}>
        <SmallHead />
        <GripRow><Grip /></GripRow>
        <FloatIcons $gap={0} $mt={16}>
          <svg width="34" height="24" viewBox="0 0 34 24">
            <defs><linearGradient id="g3"><stop offset="0" stopColor="#111" /><stop offset="1" stopColor="#ddd" /></linearGradient></defs>
            <rect x="1" y="1" width="32" height="22" fill="url(#g3)" stroke="#333" strokeWidth="2" />
          </svg>
        </FloatIcons>
      </Float>
      <SwatchesPanel />

      <EdgeText $y={1300}>g</EdgeText>
      <EdgeText $y={1340}>v</EdgeText>
      <EdgeText $y={1520}>v</EdgeText>
    </Desktop>
  );
}
